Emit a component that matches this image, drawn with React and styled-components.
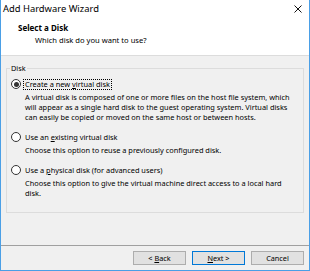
import React from "react";
import styled, { createGlobalStyle } from "styled-components";

const Global = createGlobalStyle`
  html, body { margin: 0; padding: 0; background: #fff; }
  body { font-family: "Noto Sans", "Open Sans", sans-serif; }
  * { box-sizing: border-box; }
`;

const Window = styled.div`
  width: 310px;
  height: 271px;
  display: flex;
  flex-direction: column;
  background: #f0f0f0;
  border: 1px solid #4a9fe6;
  border-top: none;
  font-family: "Noto Sans", sans-serif;
  color: #000;
  overflow: hidden;
`;

const TitleBar = styled.div`
  height: 18px;
  flex: none;
  background: #fff;
  display: flex;
  align-items: center;
  justify-content: space-between;
  padding: 0 7px 1px 2px;
`;

const Title = styled.span`
  font-size: 9.4px;
  line-height: 12px;
  color: #000;
`;

const CloseIcon = styled.svg`
  width: 8px;
  height: 8px;
  display: block;
`;

const Header = styled.div`
  height: 38px;
  flex: none;
  background: #fff;
  border-bottom: 1px solid #dcdcdc;
  padding: 4px 0 0 17px;
  display: flex;
  flex-direction: column;
  gap: 2px;
`;

const HeaderTitle = styled.div`
  font-size: 8px;
  font-weight: 700;
  line-height: 11px;
`;

const HeaderSub = styled.div`
  font-size: 7.6px;
  line-height: 11px;
  padding-left: 17px;
`;

const Body = styled.div`
  flex: 1;
  padding: 7px 5px 0 5px;
`;

const Group = styled.fieldset`
  margin: 0;
  border: 1px solid #dcdcdc;
  padding: 6px 4px 14px 4px;
  display: flex;
  flex-direction: column;
`;

const Legend = styled.legend`
  font-size: 7.3px;
  line-height: 10px;
  padding: 0 1px;
  margin-left: -1px;
`;

const Option = styled.div`
  display: flex;
  flex-direction: column;
  margin-bottom: ${(p) => (p.$last ? 0 : 10)}px;
`;

const RadioRow = styled.label`
  display: flex;
  align-items: center;
  height: 10px;
  gap: 2px;
`;

const RadioCircle = styled.span`
  width: 10px;
  height: 10px;
  flex: none;
  border-radius: 50%;
  border: 1px solid #333;
  background: #fff;
  display: flex;
  align-items: center;
  justify-content: center;
  &::after {
    content: "";
    width: 5px;
    height: 5px;
    border-radius: 50%;
    background: ${(p) => (p.$checked ? "#333" : "transparent")};
  }
`;

const OptionLabel = styled.span`
  font-size: 7.4px;
  line-height: 9px;
  padding: 0 1px;
  border: 1px dotted ${(p) => (p.$focused ? "#000" : "transparent")};
`;

const Description = styled.div`
  font-size: 7.4px;
  line-height: 10px;
  padding-left: 14px;
  margin-top: 3px;
  padding-right: 4px;
`;

const Footer = styled.div`
  flex: none;
  height: 25px;
  border-top: 1px solid #a0a0a0;
  display: flex;
  justify-content: flex-end;
  align-items: flex-start;
  gap: 6px;
  padding: 5px 5px 0 0;
`;

const Button = styled.button`
  width: 53px;
  height: 14px;
  padding: 0;
  margin: 0;
  font-family: "Noto Sans", sans-serif;
  font-size: 7.3px;
  line-height: 12px;
  color: #000;
  background: #e1e1e1;
  border: 1px solid ${(p) => (p.$default ? "#0078d7" : "#adadad")};
`;

const U = styled.span`
  text-decoration: underline;
`;

const options = [
  {
    key: "new",
    label: (
      <>
        Create a new <U>v</U>irtual disk
      </>
    ),
    desc:
      "A virtual disk is composed of one or more files on the host file system, which will appear as a single hard disk to the guest operating system. Virtual disks can easily be copied or moved on the same host or between hosts.",
    checked: true,
  },
  {
    key: "existing",
    label: (
      <>
        Use an <U>e</U>xisting virtual disk
      </>
    ),
    desc: "Choose this option to reuse a previously configured disk.",
  },
  {
    key: "physical",
    label: (
      <>
        Use a <U>p</U>hysical disk (for advanced users)
      </>
    ),
    desc:
      "Choose this option to give the virtual machine direct access to a local hard disk.",
  },
];

export default function App() {
  return (
    <>
      <Global />
      <Window>
        <TitleBar>
          <Title>Add Hardware Wizard</Title>
          <CloseIcon viewBox="0 0 8 8">
            <path d="M0.5 0.5 L7.5 7.5 M7.5 0.5 L0.5 7.5" stroke="#111" strokeWidth="1" />
          </CloseIcon>
        </TitleBar>
        <Header>
          <HeaderTitle>Select a Disk</HeaderTitle>
          <HeaderSub>Which disk do you want to use?</HeaderSub>
        </Header>
        <Body>
          <Group>
            <Legend>Disk</Legend>
            {options.map((o, i) => (
              <Option key={o.key} $last={i === options.length - 1}>
                <RadioRow>
                  <RadioCircle $checked={o.checked} />
                  <OptionLabel $focused={o.checked}>{o.label}</OptionLabel>
                </RadioRow>
                <Description>{o.desc}</Description>
              </Option>
            ))}
          </Group>
        </Body>
        <Footer>
          <Button>
            &lt; <U>B</U>ack
          </Button>
          <Button $default>
            <U>N</U>ext &gt;
          </Button>
          <Button>Cancel</Button>
        </Footer>
      </Window>
    </>
  );
}
